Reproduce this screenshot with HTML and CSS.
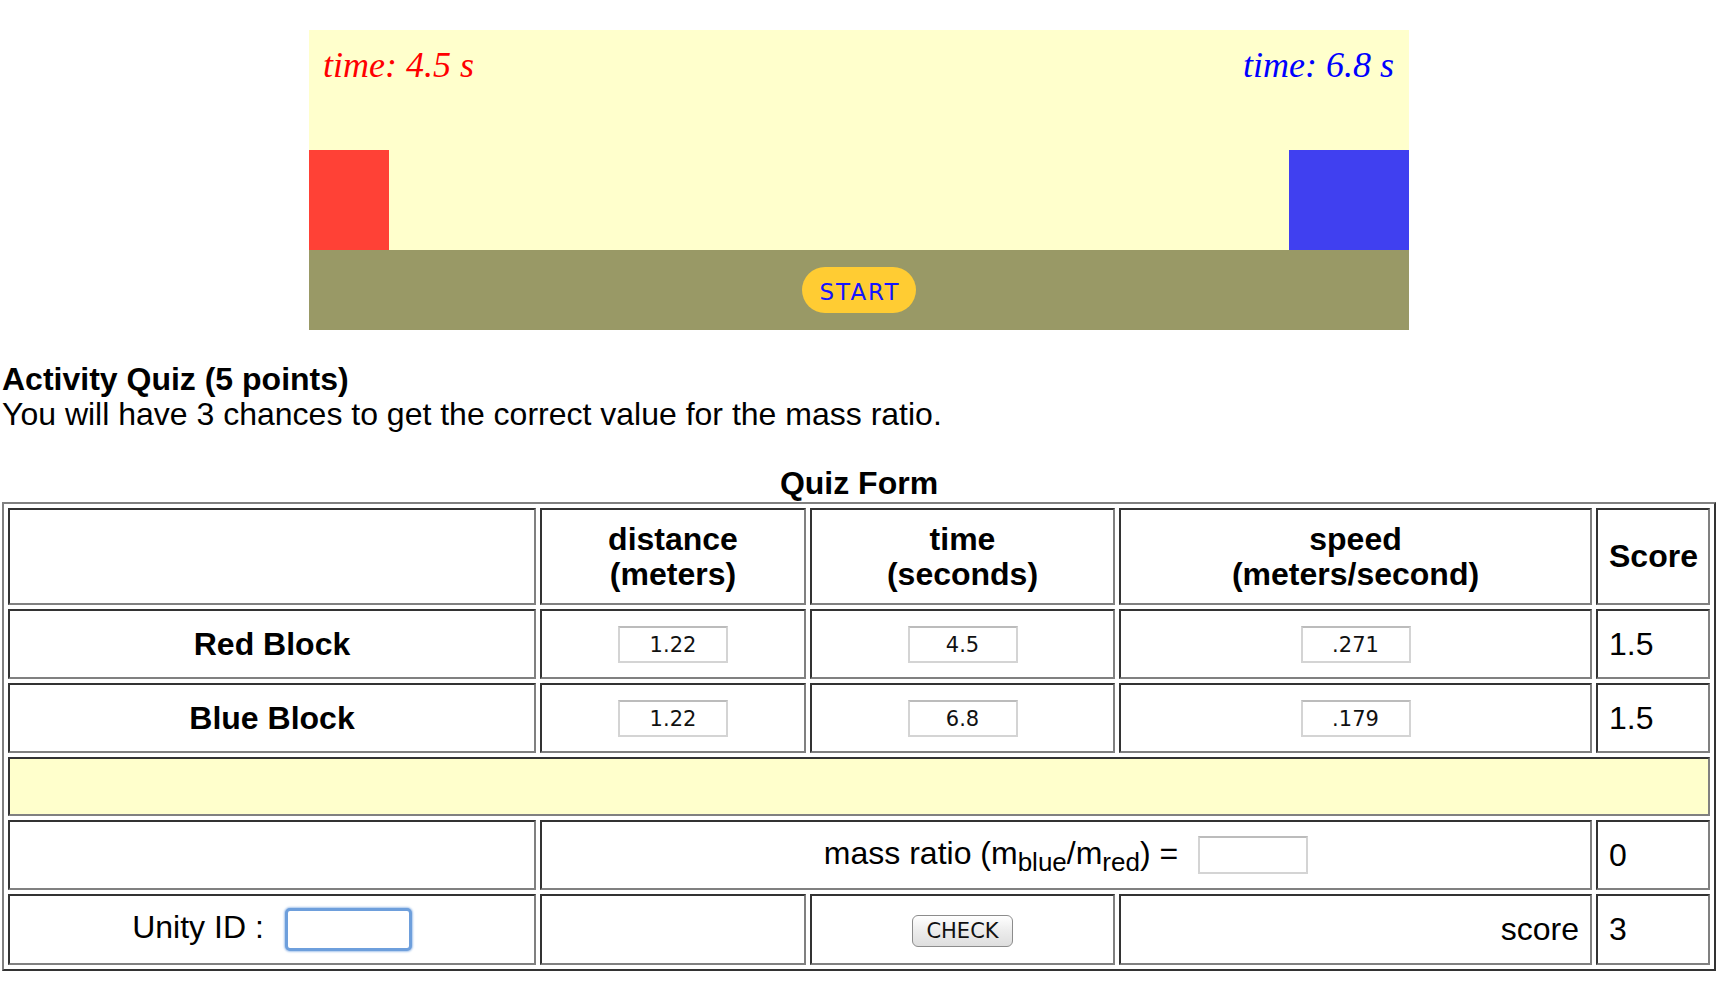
FILE: index.html
```html
<!DOCTYPE html>
<html lang="en">
<head>
<meta charset="utf-8">
<title>Activity Quiz</title>
<link rel="stylesheet" href="styles.css">
</head>
<body>
<div class="page">
  <div class="sim">
    <div class="stage">
      <div class="timers">
        <span class="timer timer-red">time: 4.5 s</span>
        <span class="timer timer-blue">time: 6.8 s</span>
      </div>
      <div class="blocks">
        <div class="block block-red"></div>
        <div class="block block-blue"></div>
      </div>
    </div>
    <div class="ground">
      <button class="start" type="button">START</button>
    </div>
  </div>

  <p class="intro"><b>Activity Quiz (5 points)</b><br>You will have 3 chances to get the correct value for the mass ratio.</p>

  <form class="quiz-form">
    <table class="quiz">
      <caption>Quiz Form</caption>
      <colgroup>
        <col class="c1">
        <col class="c2">
        <col class="c3">
        <col class="c4">
        <col class="c5">
      </colgroup>
      <tr class="r-head">
        <th></th>
        <th>distance<br>(meters)</th>
        <th>time<br>(seconds)</th>
        <th>speed<br>(meters/second)</th>
        <th>Score</th>
      </tr>
      <tr class="r-data">
        <th>Red Block</th>
        <td class="center"><input class="num" type="text" value="1.22"></td>
        <td class="center"><input class="num" type="text" value="4.5"></td>
        <td class="center"><input class="num" type="text" value=".271"></td>
        <td>1.5</td>
      </tr>
      <tr class="r-data">
        <th>Blue Block</th>
        <td class="center"><input class="num" type="text" value="1.22"></td>
        <td class="center"><input class="num" type="text" value="6.8"></td>
        <td class="center"><input class="num" type="text" value=".179"></td>
        <td>1.5</td>
      </tr>
      <tr class="r-spacer">
        <td class="note" colspan="5"></td>
      </tr>
      <tr class="r-mass">
        <td></td>
        <td class="center" colspan="3">mass ratio (m<sub>blue</sub>/m<sub>red</sub>) =<input class="num ratio" type="text" value=""></td>
        <td>0</td>
      </tr>
      <tr class="r-id">
        <td class="center">Unity ID :<input class="uid" type="text" value=""></td>
        <td></td>
        <td class="center"><button class="check" type="button">CHECK</button></td>
        <td class="right">score</td>
        <td>3</td>
      </tr>
    </table>
  </form>
</div>
</body>
</html>
```

FILE: styles.css
```css
html, body {
  margin: 0;
  padding: 0;
  background: #ffffff;
}

body {
  font-family: "Liberation Sans", Arial, Helvetica, sans-serif;
  color: #000000;
}

.page {
  width: 1714px;
  margin-left: 2px;
}

/* ---------- simulation ---------- */
.sim {
  width: 1100px;
  margin: 30px auto 0;
}

.stage {
  height: 220px;
  background: #ffffcc;
  display: flex;
  flex-direction: column;
  justify-content: space-between;
}

.timers {
  display: flex;
  justify-content: space-between;
  padding: 17px 15px 0 14px;
}

.timer {
  font-family: "Liberation Serif", "Times New Roman", serif;
  font-style: italic;
  font-size: 36px;
  line-height: 36px;
}

.timer-red { color: #ff0000; }
.timer-blue { color: #0000ff; }

.blocks {
  display: flex;
  justify-content: space-between;
  align-items: flex-end;
}

.block { height: 100px; }
.block-red { width: 80px; background: #ff4136; }
.block-blue { width: 120px; background: #4040f0; }

.ground {
  height: 80px;
  background: #999966;
  display: flex;
  align-items: center;
  justify-content: center;
}

.start {
  width: 114px;
  height: 46px;
  border: none;
  border-radius: 23px;
  background: #ffcc33;
  color: #1414ff;
  font-family: "DejaVu Sans", sans-serif;
  font-size: 23px;
  letter-spacing: 2px;
  padding: 3px 0 0 2px;
  cursor: pointer;
}

/* ---------- intro ---------- */
.intro {
  margin: 32px 0 33px;
  font-size: 32px;
  line-height: 35px;
}

.quiz-form { margin: 0; }

/* ---------- quiz table ---------- */
.quiz {
  box-sizing: border-box;
  width: 1714px;
  table-layout: fixed;
  border-collapse: separate;
  border-spacing: 4px;
  border: 2px solid;
  border-color: #808080 #333333 #333333 #808080;
  font-size: 32px;
  line-height: 35px;
}

.quiz caption {
  font-weight: bold;
  line-height: 37px;
  text-align: center;
}

.c1 { width: 528px; }
.c2 { width: 266px; }
.c3 { width: 305px; }
.c4 { width: 473px; }
.c5 { width: 114px; }

.quiz th,
.quiz td {
  border: 2px solid;
  border-color: #333333 #808080 #808080 #333333;
  padding: 0 11px;
  vertical-align: middle;
  text-align: left;
}

.quiz th {
  font-weight: bold;
  text-align: center;
}

.quiz td.center { text-align: center; }
.quiz td.right { text-align: right; }

.r-head { height: 97px; }
.r-data { height: 70px; }
.r-spacer { height: 59px; }
.r-mass { height: 70px; }
.r-id { height: 71px; }

.quiz td.note { background: #ffffcc; }

.quiz sub {
  font-size: 26px;
  line-height: 0;
}

.num {
  box-sizing: border-box;
  width: 110px;
  height: 37px;
  margin: 0;
  padding: 0;
  border: 2px solid #d4d4d4;
  border-top-color: #bcbcbc;
  background: #ffffff;
  font-family: "DejaVu Sans", sans-serif;
  font-size: 21px;
  color: #111111;
  text-align: center;
  vertical-align: middle;
}

.ratio {
  height: 38px;
  margin-left: 20px;
}

.uid {
  box-sizing: border-box;
  width: 127px;
  height: 43px;
  margin: 0 0 0 21px;
  padding: 0;
  border: 3px solid #6e9fdc;
  border-radius: 5px;
  box-shadow: 0 0 2px 1px #a9c6ec;
  background: #ffffff;
  vertical-align: middle;
}

.check {
  box-sizing: border-box;
  width: 101px;
  height: 32px;
  padding: 0;
  border: 1px solid #8c8c8c;
  border-radius: 6px;
  background: linear-gradient(#ffffff, #ececec 50%, #dedede);
  font-family: "DejaVu Sans", sans-serif;
  font-size: 21px;
  color: #111111;
  vertical-align: middle;
}
```
